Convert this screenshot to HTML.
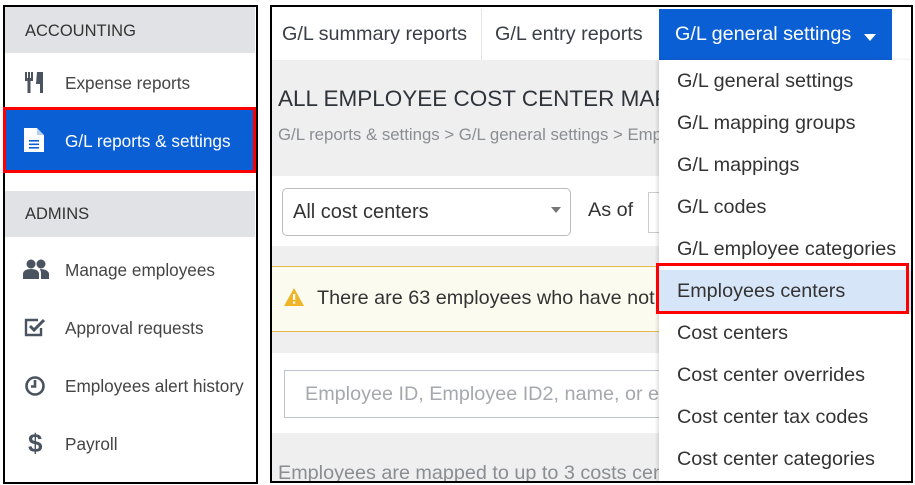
<!DOCTYPE html>
<html><head><style>
*{box-sizing:border-box;margin:0;padding:0}
body{width:915px;height:485px;background:#fff;font-family:"Liberation Sans",sans-serif;position:relative;overflow:hidden;color:#3a3f47}
.a{position:absolute}
.lp{left:3px;top:5px;width:255px;height:479px;border:2px solid #000;background:#fff}
.hd{left:2px;width:250px;height:46px;background:#e1e2e5;font-size:16.5px;color:#333;padding-left:20px;line-height:46px}
.it{left:22px;font-size:17.2px;color:#444}
.it span{position:absolute;left:43px;white-space:nowrap}
.rp{left:270px;top:5px;width:643px;height:478px;border:2px solid #000;background:#efefef;overflow:hidden}
.dd div{height:42px;line-height:42px;padding-left:18px;font-size:19.8px;color:#333;white-space:nowrap}
</style></head><body>
<div class="a lp"></div>
<div class="a hd" style="top:7px;left:5px;padding-top:1px">ACCOUNTING</div>
<div class="a hd" style="top:191px;left:5px">ADMINS</div>
<div class="a" style="left:5px;top:110px;width:248px;height:61px;background:#0b5fd4"></div>
<div class="a" style="left:3px;top:107px;width:253px;height:66px;border:3px solid #f00"></div>
<svg class="a" style="left:24px;top:72px" width="22" height="22" viewBox="0 0 22 22" fill="#4a5360"><rect x="1" y="0" width="2" height="7"/><rect x="4" y="0" width="2" height="7"/><rect x="7" y="0" width="2" height="7"/><rect x="1" y="6" width="8" height="3"/><rect x="3.5" y="8" width="3" height="13"/><path d="M13 0h6v21h-3v-9h-4z"/></svg>
<svg class="a" style="left:24px;top:128px" width="20" height="24" viewBox="0 0 20 24"><path d="M0 0h13l7 7v17H0z" fill="#fff"/><path d="M13 0v7h7" fill="#0b5fd4" opacity=".3"/><rect x="5" y="12" width="10" height="1.6" fill="#0b5fd4"/><rect x="5" y="15.5" width="10" height="1.6" fill="#0b5fd4"/><rect x="5" y="19" width="10" height="1.6" fill="#0b5fd4"/></svg>
<svg class="a" style="left:23px;top:259px" width="26" height="20" viewBox="0 0 26 20" fill="#4a5360"><circle cx="8" cy="5" r="4.5"/><path d="M0 20v-5c0-3 3-5 8-5s8 2 8 5v5z"/><circle cx="18" cy="5" r="4.5"/><path d="M17 10c5 0 9 2 9 5v5h-8v-6c0-2-1-3-1-4z"/></svg>
<svg class="a" style="left:24px;top:317px" width="22" height="20" viewBox="0 0 22 20" fill="none" stroke="#4a5360" stroke-width="2.4"><path d="M17 11v7H2V3h12"/><path d="M6 9l4 4 10-10" stroke-width="3"/></svg>
<svg class="a" style="left:24px;top:375px" width="22" height="22" viewBox="0 0 22 22" fill="none" stroke="#4a5360" stroke-width="2.6"><circle cx="11" cy="11" r="8.5"/><path d="M11 5v6.5H7"/></svg>
<div class="a" style="left:28px;top:428px;font-size:26px;font-weight:bold;color:#4a5360">$</div>
<div class="a it" style="top:73px"><span>Expense reports</span></div>
<div class="a it" style="top:131px;color:#fff"><span>G/L reports &amp; settings</span></div>
<div class="a it" style="top:260px"><span>Manage employees</span></div>
<div class="a it" style="top:318px"><span>Approval requests</span></div>
<div class="a it" style="top:376px"><span>Employees alert history</span></div>
<div class="a it" style="top:434px"><span>Payroll</span></div>

<div class="a rp">
 <div class="a" style="left:0;top:0;width:650px;height:53px;background:#fff"></div>
 <div class="a" style="left:209px;top:2px;width:1px;height:51px;background:#e4e4e4"></div>
 <div class="a" style="left:10px;top:16px;font-size:19.8px;color:#3a3f47">G/L summary reports</div>
 <div class="a" style="left:223px;top:16px;font-size:19.8px;color:#3a3f47">G/L entry reports</div>
 <div class="a" style="left:6px;top:79px;font-size:22.5px;color:#2f343b;white-space:nowrap">ALL EMPLOYEE COST CENTER MAPPINGS</div>
 <div class="a" style="left:6px;top:118px;font-size:16.8px;color:#8a8d92;white-space:nowrap">G/L reports &amp; settings &gt; G/L general settings &gt; Employees centers</div>
 <div class="a" style="left:0;top:169px;width:650px;height:70px;background:#fff"></div>
 <div class="a" style="left:10px;top:181px;width:289px;height:48px;border:1px solid #bbb;border-radius:5px;background:#fff"></div>
 <div class="a" style="left:21px;top:194px;font-size:20px;color:#333">All cost centers</div>
 <div class="a" style="left:279px;top:200px;border:5px solid transparent;border-top:6px solid #777"></div>
 <div class="a" style="left:316px;top:192px;font-size:19.8px;color:#333">As of</div>
 <div class="a" style="left:376px;top:185px;width:40px;height:41px;border:1px solid #ccc"></div>
 <div class="a" style="left:0;top:259px;width:650px;height:66px;background:#fcfbf0;border-top:1px solid #e5b84a;border-bottom:1px solid #e5b84a"></div>
 <svg class="a" style="left:12px;top:281px" width="20" height="18" viewBox="0 0 20 18"><path d="M10 0L20 18H0z" fill="#f0b429"/><rect x="9" y="6" width="2.2" height="6" fill="#fff"/><rect x="9" y="13.5" width="2.2" height="2.2" fill="#fff"/></svg>
 <div class="a" style="left:45px;top:280px;font-size:19.8px;color:#333;white-space:nowrap">There are 63 employees who have not been mapped</div>
 <div class="a" style="left:0;top:346px;width:650px;height:80px;background:#fff"></div>
 <div class="a" style="left:12px;top:363px;width:400px;height:48px;border:1px solid #bcc3cc;background:#fff"></div>
 <div class="a" style="left:33px;top:376px;font-size:19.8px;color:#a5a8ad;white-space:nowrap">Employee ID, Employee ID2, name, or email</div>
 <div class="a" style="left:6px;top:455px;font-size:19.8px;color:#8a8d92;white-space:nowrap">Employees are mapped to up to 3 costs centers</div>
 <div class="a" style="left:387px;top:2px;width:233px;height:51px;background:#0b5fd4"></div>
 <div class="a" style="left:403px;top:16px;font-size:19.8px;color:#fff">G/L general settings</div>
 <div class="a" style="left:592px;top:27px;border:6px solid transparent;border-top:7px solid #fff"></div>
 <div class="a dd" style="left:387px;top:53px;width:262px;height:430px;background:#fff;box-shadow:-2px 0 3px rgba(0,0,0,.12)">
  <div>G/L general settings</div><div>G/L mapping groups</div><div>G/L mappings</div><div>G/L codes</div><div>G/L employee categories</div>
  <div style="background:#d7e5f8">Employees centers</div><div>Cost centers</div><div>Cost center overrides</div><div>Cost center tax codes</div><div>Cost center categories</div>
 </div>
</div>
<div class="a" style="left:656px;top:263px;width:253px;height:51px;border:3px solid #f00"></div>
</body></html>
